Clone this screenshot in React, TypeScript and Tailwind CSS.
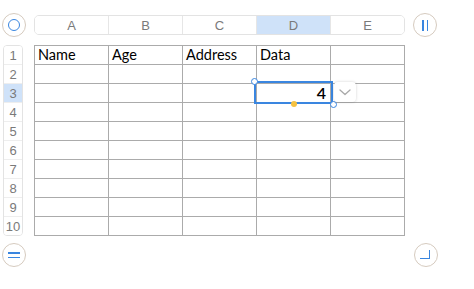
const cols = ['A', 'B', 'C', 'D', 'E'];
const rows = [1, 2, 3, 4, 5, 6, 7, 8, 9, 10];
const headers = ['Name', 'Age', 'Address', 'Data', ''];

function RoundButton({ children }: { children: React.ReactNode }) {
  return (
    <div className="flex items-center justify-center w-[24px] h-[24px] rounded-full border border-[#d6cbbf] bg-white shrink-0">
      {children}
    </div>
  );
}

export default function App() {
  return (
    <div className="w-[474px] h-[289px] bg-white font-['Liberation_Sans',sans-serif] pl-[2px] pt-[13px] flex flex-col">
      {/* top row */}
      <div className="flex items-center h-[24px]">
        <RoundButton>
          <div className="w-[12px] h-[12px] rounded-full border-[1.5px] border-[#3a86e0]" />
        </RoundButton>
        <div className="ml-[8px] w-[371px] h-[20px] flex rounded-[5px] border border-[#e3e3e3] overflow-hidden">
          {cols.map((c, i) => (
            <div
              key={c}
              className={
                'flex-1 flex items-center justify-center text-[13px] leading-none text-[#7a7a7a] ' +
                (i > 0 ? 'border-l border-[#e6e6e6] ' : '') +
                (c === 'D' ? 'bg-[#cfe2f9]' : 'bg-white')
              }
            >
              {c}
            </div>
          ))}
        </div>
        <div className="ml-[8px]">
          <RoundButton>
            <div className="flex gap-[3px]">
              <div className="w-[1.5px] h-[11px] bg-[#3a86e0]" />
              <div className="w-[1.5px] h-[11px] bg-[#3a86e0]" />
            </div>
          </RoundButton>
        </div>
      </div>

      {/* sheet */}
      <div className="flex mt-[8px]">
        <div className="ml-[1px] w-[20px] h-[191px] flex flex-col rounded-[4px] border border-[#e3e3e3] overflow-hidden">
          {rows.map((r, i) => (
            <div
              key={r}
              className={
                'flex-1 min-h-0 flex items-center justify-center text-[13px] leading-none text-[#7a7a7a] ' +
                (i > 0 ? 'border-t border-[#eeeeee] ' : '') +
                (r === 3 ? 'bg-[#cfe2f9]' : 'bg-white')
              }
            >
              {r}
            </div>
          ))}
        </div>

        <div className="relative ml-[11px] w-[371px] h-[191px]">
          <div className="grid grid-cols-[repeat(5,73px)] grid-rows-[repeat(10,18px)] gap-px p-px bg-[#ababab]">
            {rows.map((r) =>
              cols.map((c, ci) => (
                <div
                  key={c + r}
                  className={
                    'bg-white flex items-center px-[3px] text-[14.5px] leading-none text-black font-[Lato,sans-serif] ' +
                    (r === 3 && c === 'D' ? 'justify-end pr-[4px]' : '')
                  }
                >
                  {r === 1 ? headers[ci] : r === 3 && c === 'D' ? <span className="text-[16px] font-semibold">4</span> : ''}
                </div>
              ))
            )}
          </div>

          {/* selection */}
          <div className="absolute left-[220px] top-[36px] w-[79px] h-[23px] border-2 border-[#3a86e0]" />
          <div className="absolute left-[216.5px] top-[32.5px] w-[7px] h-[7px] rounded-full bg-white border-[1.5px] border-[#3a86e0]" />
          <div className="absolute left-[295.5px] top-[55.5px] w-[7px] h-[7px] rounded-full bg-white border-[1.5px] border-[#3a86e0]" />
          <div className="absolute left-[257px] top-[56px] w-[6px] h-[6px] rounded-full bg-[#f5c242]" />

          {/* dropdown */}
          <div className="absolute left-[300px] top-[37px] w-[22px] h-[20px] rounded-[4px] bg-white shadow-[0_0_3px_rgba(0,0,0,0.18)] flex items-center justify-center">
            <svg width="12" height="7" viewBox="0 0 12 7" fill="none">
              <path d="M1 1l5 4.5L11 1" stroke="#a9a9a9" strokeWidth="1.3" strokeLinecap="round" strokeLinejoin="round" />
            </svg>
          </div>
        </div>
      </div>

      {/* bottom row */}
      <div className="flex items-center justify-between w-[436px] mt-[7px]">
        <RoundButton>
          <div className="flex flex-col gap-[3px]">
            <div className="w-[12px] h-[1.5px] bg-[#3a86e0]" />
            <div className="w-[12px] h-[1.5px] bg-[#3a86e0]" />
          </div>
        </RoundButton>
        <RoundButton>
          <div className="w-[10px] h-[9px] border-r-[1.5px] border-b-[1.5px] border-[#3a86e0] -translate-x-[1px] -translate-y-[1px]" />
        </RoundButton>
      </div>
    </div>
  );
}
